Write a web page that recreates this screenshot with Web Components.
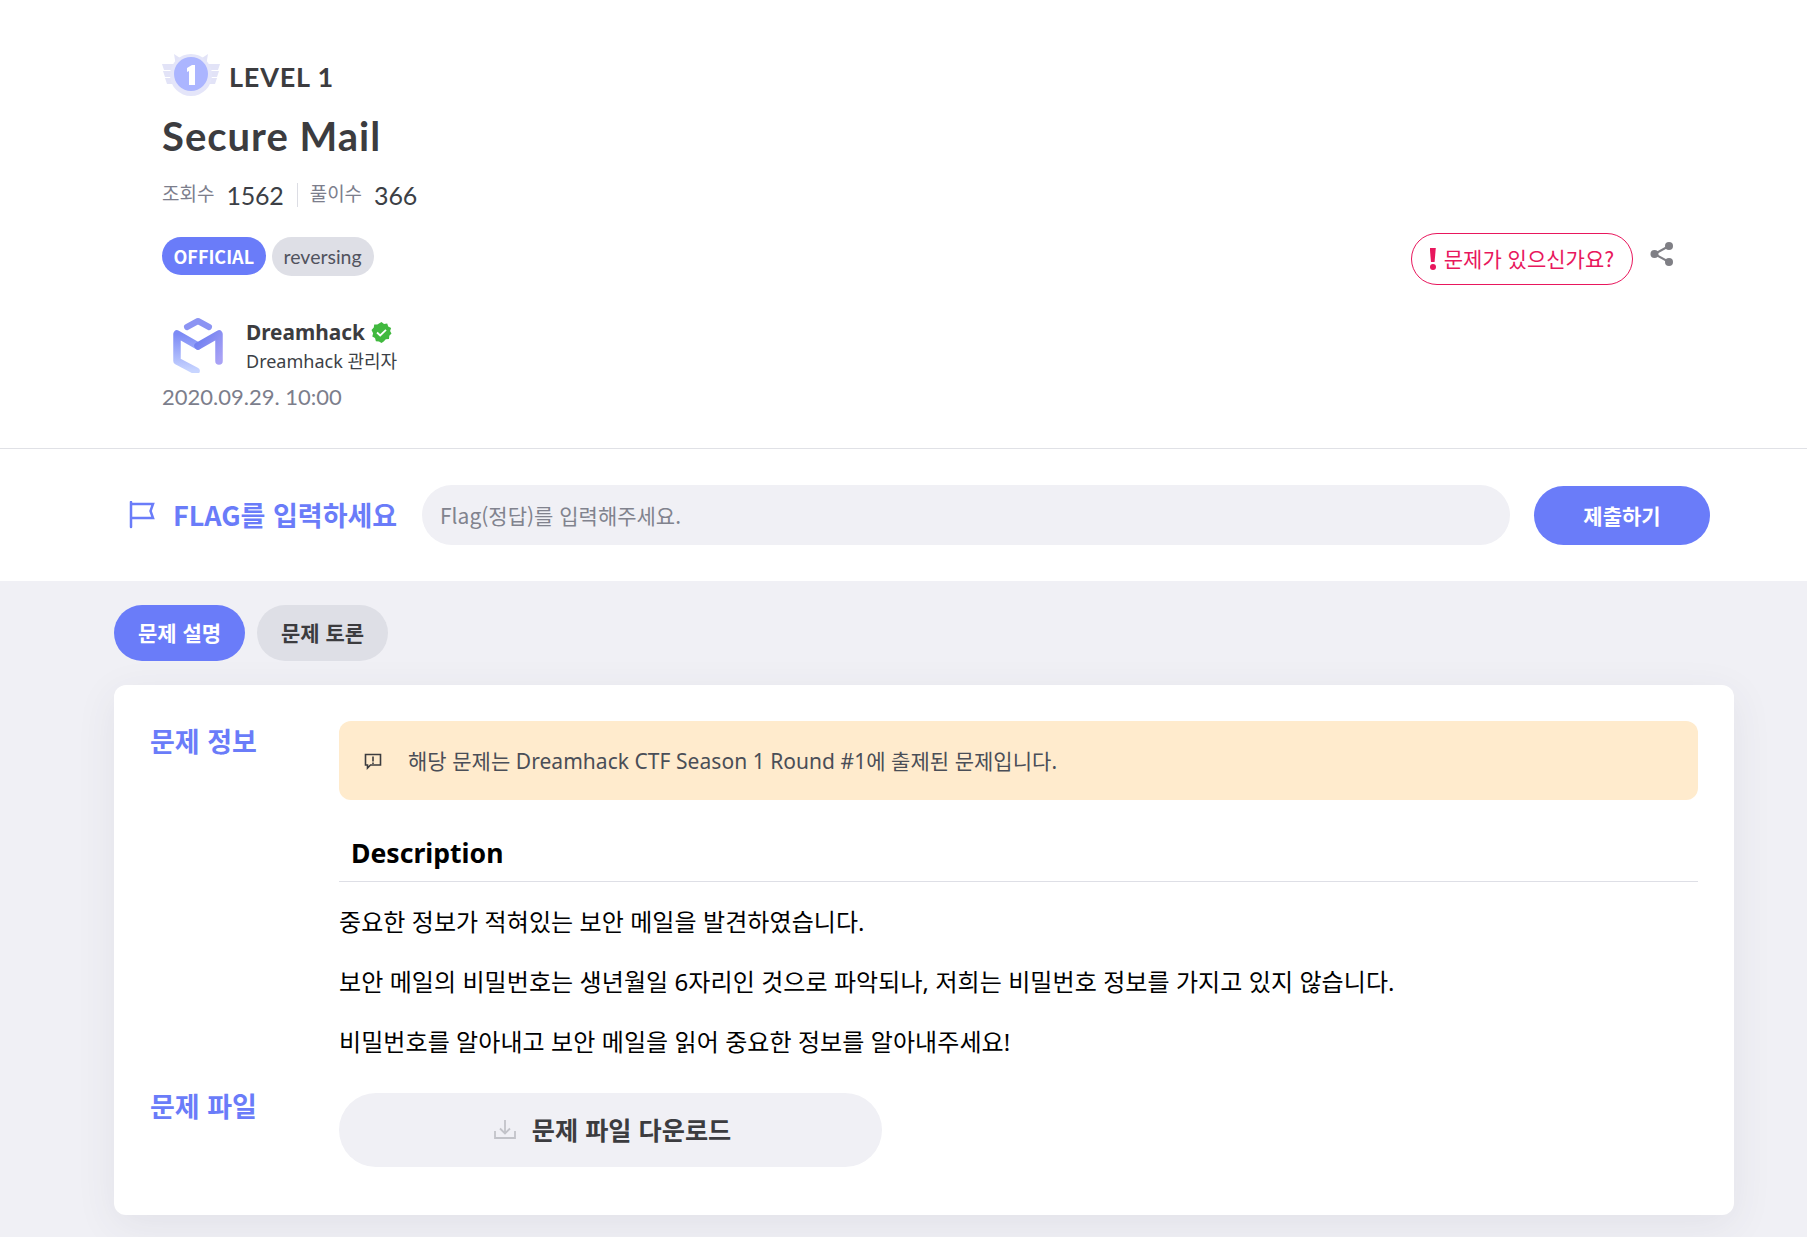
<!DOCTYPE html>
<html lang="ko"><head><meta charset="utf-8"><title>Secure Mail</title>
<style>
html,body{margin:0;padding:0;background:#fff}
body{font-family:Lato,"Noto Sans CJK KR",sans-serif;color:#3c3c3f;width:1807px;height:1237px;overflow:hidden}
</style></head><body>
<challenge-page></challenge-page>
<script>
const FONT='Lato,"Noto Sans CJK KR",sans-serif';
const KR='"Noto Sans CJK KR",sans-serif';
function def(name,css,html){
  customElements.define(name,class extends HTMLElement{
    constructor(){super();const r=this.attachShadow({mode:'open'});r.innerHTML='<style>'+css+'</style>'+html;}
  });
}
def('level-badge',`:host{display:flex;align-items:center;gap:8px;height:44px;margin-left:-1px}
span{font:700 27px/44px ${FONT};letter-spacing:.8px;color:#3c3c3f;padding-top:3px}`,
`<svg width="60" height="44" viewBox="0 0 60 44">
<g fill="#e2e3f7"><path d="M1 11h13v6H3zM2 18h12v6H4zM4 25h12l1 6H6zM59 11H46v6h11zM58 18H46v6h10zM56 25H44l-1 6h11z"/><path d="M13 1l9 6-7 6zM47 1l-9 6 7 6z"/></g>
<circle cx="30" cy="22" r="21" fill="#e4e5f9"/><circle cx="30" cy="21" r="17" fill="#abb5ff"/>
<path d="M26 15l5-3h3v20h-6V18l-2 1z" fill="#fff"/></svg><span><slot></slot></span>`);

def('stat-row',`:host{display:flex;align-items:center;height:30px}
.k{font:400 19px/30px ${KR};color:#7c7e8c;margin-right:12px;position:relative;top:-2px}
.v{font:400 25px/30px Lato,sans-serif;color:#3c3f46;letter-spacing:-.2px}
.s{width:1px;height:24px;background:#dcdde4;margin:0 12px 0 13px}`,
`<span class="k">조회수</span><span class="v">1562</span><i class="s"></i><span class="k">풀이수</span><span class="v">366</span>`);

def('tag-pill',`:host{display:inline-flex;align-items:center;height:39px;padding:0 12px;border-radius:19.5px;background:#dedfe6;color:#51535e;font:400 19.5px/38px ${FONT};box-sizing:border-box}
:host([primary]){background:#6a7cf9;color:#fff;font:700 18px/38px ${KR};height:38px;padding:0 11.500px}`,`<slot></slot>`);

def('author-card',`:host{display:flex;align-items:flex-start;height:62px}
svg{margin:1px 23px 0 11px;flex:none}
.n{font:700 20.800px/26px "Noto Sans",${KR};color:#3c3c3f;display:flex;align-items:center;gap:6px;margin-top:3px}
.s{font:400 18px/26px "Noto Sans",${KR};color:#3c3f46;margin-top:3px}`,
`<svg width="50" height="56" viewBox="0 0 50 56"><defs>
<linearGradient id="a" x1="0" y1="0" x2="0" y2="1"><stop offset="0" stop-color="#7c8af5"/><stop offset="1" stop-color="#c8d5ff"/></linearGradient>
<linearGradient id="b" x1="0" y1="0" x2="1" y2="1"><stop offset="0" stop-color="#6a7cf0"/><stop offset="1" stop-color="#a9a2f5"/></linearGradient></defs>
<path d="M14 10l11-6 11 6" fill="none" stroke="#8c94f3" stroke-width="6" stroke-linecap="round" stroke-linejoin="round"/>
<path d="M25 29L4 17v27l19 10" fill="none" stroke="url(#a)" stroke-width="7.500" stroke-linecap="round" stroke-linejoin="round"/>
<path d="M25 29l21-12v27" fill="none" stroke="url(#b)" stroke-width="7.500" stroke-linecap="round" stroke-linejoin="round"/></svg>
<div><div class="n">Dreamhack<svg style="margin:0" width="21" height="21" viewBox="0 0 21 21"><path fill="#41b93f" d="M10.500 0l2.500 2 3.200-.6 1 3 2.900 1.500-1 3 1.400 2.600-2.200 2.300-.3 3.200-3.200.2-2.100 2.300-2.200 1.500-2.500-1.500-3.100-.3-.9-3.100-2.700-1.700.8-3.100L.5 7.900l2.300-2.300.4-3.200 3.100.1z"/><path d="M6 10.500l3.200 3 5.800-5.700" fill="none" stroke="#fff" stroke-width="1.800"/></svg></div><div class="s">Dreamhack 관리자</div></div>`);

def('report-button',`:host{display:inline-flex;align-items:center;justify-content:center;box-sizing:border-box;width:222px;height:52px;border:1px solid #e8175d;border-radius:26px;color:#e8175d;font:400 21px/50px "Noto Sans CJK KR",sans-serif;gap:8px}
span{padding-bottom:2px}
i{display:block;width:6px;height:22px;position:relative}
i:before{content:"";position:absolute;left:0;top:0;width:6px;height:14px;background:#e8175d;clip-path:polygon(0 0,100% 0,80% 100%,20% 100%)}
i:after{content:"";position:absolute;left:0;bottom:0;width:6px;height:6px;background:#e8175d;border-radius:50%}`,`<i></i><span><slot></slot></span>`);

def('share-icon',`:host{display:block;width:24px;height:26px}`,
`<svg width="24" height="26" viewBox="0 0 24 26"><g fill="#7f7f85"><circle cx="19" cy="5" r="4"/><circle cx="4.500" cy="13" r="4"/><circle cx="19" cy="21" r="4"/></g><path d="M19 5L4.500 13 19 21" fill="none" stroke="#7f7f85" stroke-width="2"/></svg>`);

def('page-head',`:host{display:block;box-sizing:border-box;height:449px;padding:53px 0 0 162px;border-bottom:1px solid #e0e1e6;position:relative}
h1{margin:14px 0 0;font:700 40px/50px ${FONT};color:#3c3c3f;letter-spacing:1px}
stat-row{margin-top:19px}
.tags{display:flex;gap:6px;margin-top:27px;align-items:flex-start}
author-card{margin-top:40px}
.d{font:400 22px/28px ${FONT};color:#7c7e8c;margin-top:5px}
.act{position:absolute;left:1411px;top:233px;display:flex;gap:17px;align-items:flex-start}
share-icon{margin-top:8px}`,
`<level-badge>LEVEL 1</level-badge><h1>Secure Mail</h1><stat-row></stat-row>
<div class="tags"><tag-pill primary>OFFICIAL</tag-pill><tag-pill>reversing</tag-pill></div>
<author-card></author-card><div class="d">2020.09.29. 10:00</div>
<div class="act"><report-button>문제가 있으신가요?</report-button><share-icon></share-icon></div>`);

def('flag-bar',`:host{display:flex;align-items:center;box-sizing:border-box;height:132px;padding:0 97px 0 129px;background:#fff}
svg{flex:none;margin-right:18px}
h2{margin:0;font:700 27px/36px ${KR};color:#6a7cf9;white-space:nowrap;width:249px}
.in{flex:1;height:60px;border-radius:30px;background:#f0f0f5;color:#81838e;font:400 21px/60px ${KR};padding:0 18px;box-sizing:border-box;margin-right:24px}
.b{width:176px;height:59px;margin-top:1px;border-radius:30px;background:#6a7cf9;color:#fff;font:700 21px/59px ${KR};text-align:center}`,
`<svg width="26" height="28" viewBox="0 0 26 28"><path d="M2 1v25M2 3h22l-2.500 7 2.500 7H2" fill="none" stroke="#6a7cf9" stroke-width="2.500" stroke-linecap="round"/></svg>
<h2>FLAG를 입력하세요</h2><div class="in">Flag(정답)를 입력해주세요.</div><div class="b">제출하기</div>`);

def('tab-pill',`:host{display:block;width:131px;height:56px;border-radius:28px;background:#dedfe6;color:#3c3c3f;font:700 21px/54px ${KR};text-align:center}
:host([active]){background:#6a7cf9;color:#fff}`,`<slot></slot>`);

def('notice-box',`:host{display:flex;align-items:center;height:79px;border-radius:12px;background:#ffebcd;padding:0 0 0 25px;color:#4a4e57;font:400 21px/30px "Noto Sans",${KR};letter-spacing:.04px}
svg{flex:none;margin-right:26px}`,
`<svg width="18" height="18" viewBox="0 0 18 18"><path d="M1.500 2.500h15v10.500H6.500L3.500 16v-3h-2z" fill="none" stroke="#3c3c3f" stroke-width="1.600"/><path d="M9 4.500v5M9 10.500v1.500" stroke="#3c3c3f" stroke-width="1.600"/></svg><slot></slot>`);

def('download-button',`:host{display:flex;align-items:center;justify-content:center;gap:16px;box-sizing:border-box;width:543px;height:74px;padding:0 0 2px 4px;border-radius:37px;background:#f0f0f5;color:#3c3c3f;font:700 25.200px/72px ${KR}}`,
`<svg width="22" height="20" viewBox="0 0 22 20"><path d="M11 1v13M6 9.500l5 5 5-5M1 12v7h20v-7" fill="none" stroke="#c2c3c9" stroke-width="1.800"/></svg><slot></slot>`);

def('info-card',`:host{display:grid;grid-template-columns:189px 1359px;align-content:start;box-sizing:border-box;width:1620px;height:530px;padding:36px 36px 0;background:#fff;border-radius:12px;box-shadow:0 10px 40px rgba(60,60,90,.08)}
.l{font:700 27px/44px ${KR};color:#6a7cf9;white-space:nowrap;margin-top:-2px}
h3{margin:0;padding:35px 0 0 12px;height:82px;box-sizing:border-box;border-bottom:1px solid #dedfe6;font:700 26.600px/36px "Noto Sans",${KR};color:#000}
p{margin:0;font:400 24px/60px "Noto Sans",${KR};color:#000;letter-spacing:.08px}
.ps{padding-top:10px;height:211px;box-sizing:border-box}
.l.f{margin-top:-9px}`,
`<div class="l">문제 정보</div><div><notice-box>해당 문제는 Dreamhack CTF Season 1 Round #1에 출제된 문제입니다.</notice-box>
<h3>Description</h3><div class="ps"><p>중요한 정보가 적혀있는 보안 메일을 발견하였습니다.</p><p>보안 메일의 비밀번호는 생년월일 6자리인 것으로 파악되나, 저희는 비밀번호 정보를 가지고 있지 않습니다.</p><p>비밀번호를 알아내고 보안 메일을 읽어 중요한 정보를 알아내주세요!</p></div></div>
<div class="l f">문제 파일</div><div><download-button>문제 파일 다운로드</download-button></div>`);

def('content-area',`:host{display:block;box-sizing:border-box;height:656px;background:#f0f0f5;padding:24px 0 0 114px}
.t{display:flex;gap:12px;margin-bottom:24px}`,
`<div class="t"><tab-pill active>문제 설명</tab-pill><tab-pill>문제 토론</tab-pill></div><info-card></info-card>`);

def('challenge-page',`:host{display:block}`,`<page-head></page-head><flag-bar></flag-bar><content-area></content-area>`);
</script></body></html>
